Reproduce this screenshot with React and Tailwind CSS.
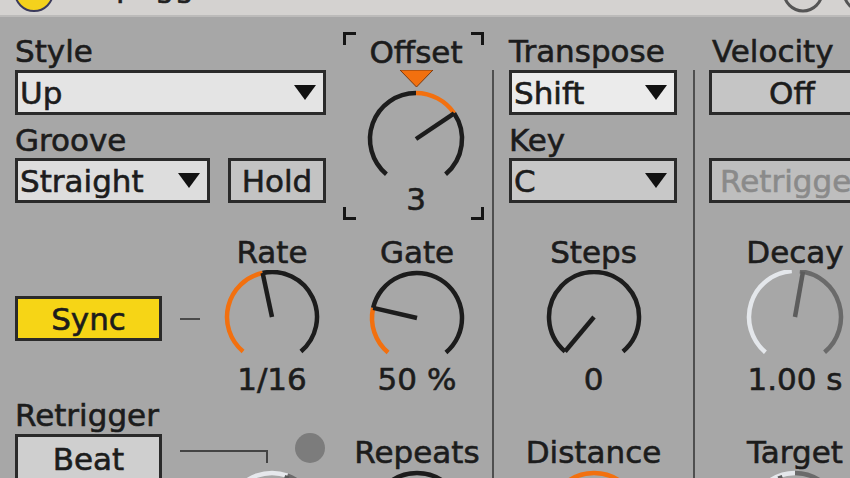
import React from "react";

const INK = "#1c1c1c";
const ORANGE = "#f2700f";

function pt(cx, cy, r, a) {
  const rad = (a * Math.PI) / 180;
  return [cx + r * Math.sin(rad), cy - r * Math.cos(rad)];
}

function arcPath(cx, cy, r, from, to) {
  const [x1, y1] = pt(cx, cy, r, from);
  const [x2, y2] = pt(cx, cy, r, to);
  const large = to - from > 180 ? 1 : 0;
  return `M${x1} ${y1} A${r} ${r} 0 ${large} 1 ${x2} ${y2}`;
}

// knob: arcs from -140 to 140 degrees, pointer from the centre to the arc
function Knob({ w = 100, h = 91, cx = 50, cy = 47, r = 45, arcs, ptr, ptrColor = INK, children }) {
  const [px, py] = ptr == null ? [cx, cy] : pt(cx, cy, r, ptr);
  return (
    <svg width={w} height={h} className="block shrink-0">
      {children}
      {arcs.map((a, i) => (
        <path key={i} d={arcPath(cx, cy, r, a[0], a[1])} fill="none" stroke={a[2]} strokeWidth="4.5" />
      ))}
      {ptr != null && <line x1={cx} y1={cy} x2={px} y2={py} stroke={ptrColor} strokeWidth="4.5" />}
    </svg>
  );
}

function Label({ children, className = "" }) {
  return (
    <div className={`h-[36px] shrink-0 leading-[36px] text-[31px] text-[#1c1c1c] whitespace-nowrap ${className}`}>
      {children}
    </div>
  );
}

function Arrow() {
  return (
    <svg width="22" height="15" className="shrink-0">
      <polygon points="0,0 22,0 11,15" fill="#111" />
    </svg>
  );
}

function Dropdown({ value, className = "" }) {
  return (
    <div
      className={`flex shrink-0 items-center justify-between h-[45px] border-[3px] border-[#2a2a2a] pl-[2px] pr-[7px] text-[31px] leading-[36px] text-[#1c1c1c] ${className}`}
    >
      <span>{value}</span>
      <Arrow />
    </div>
  );
}

function Button({ children, className = "" }) {
  return (
    <div
      className={`flex shrink-0 items-center justify-center h-[45px] border-[3px] border-[#2a2a2a] text-[31px] leading-[36px] whitespace-nowrap overflow-hidden ${className}`}
    >
      {children}
    </div>
  );
}

function Corner({ className }) {
  return <div className={`absolute w-[13px] h-[13px] border-[#151515] ${className}`} />;
}

export default function App() {
  return (
    <div className="w-[850px] h-[478px] overflow-hidden bg-[#a7a7a7] font-['DejaVu_Sans',sans-serif] text-[#1c1c1c] [-webkit-text-stroke:0.6px]">
      {/* title bar, mostly cropped */}
      <div className="h-[17px] bg-[#d4d2d0] border-b-2 border-[#bcbbba] flex overflow-hidden">
        <svg width="60" height="15" className="shrink-0">
          <circle cx="34" cy="-8" r="19" fill="#f4d21c" stroke="#3b3b5c" strokeWidth="2" />
        </svg>
        <div className="ml-[22px] mt-[-32px] h-[36px] leading-[36px] text-[31px] text-[#222]">Arpeggiator</div>
        <div className="flex-1" />
        <svg width="90" height="15" className="shrink-0">
          <circle cx="43" cy="-8" r="19" fill="none" stroke="#555" strokeWidth="3" />
          <circle cx="103" cy="-8" r="19" fill="none" stroke="#555" strokeWidth="3" />
        </svg>
      </div>

      <div className="flex h-[461px]">
        {/* column 1 */}
        <div className="w-[492px] shrink-0 flex flex-col">
          <div className="h-[217px] shrink-0 flex pl-[15px] pt-[15px]">
            <div className="w-[311px] pt-[1px]">
              <Label>Style</Label>
              <Dropdown value="Up" className="mt-[1px] bg-[#e4e4e4]" />
              <Label className="mt-[7px]">Groove</Label>
              <div className="flex">
                <Dropdown value="Straight" className="w-[195px] bg-[#dddddd]" />
                <Button className="ml-[18px] w-[98px] bg-[#c3c3c3]">Hold</Button>
              </div>
            </div>
            <div className="relative ml-[17px] w-[141px] h-[188px] flex flex-col items-center">
              <Corner className="left-0 top-0 border-l-[3px] border-t-[3px]" />
              <Corner className="right-0 top-0 border-r-[3px] border-t-[3px]" />
              <Corner className="left-0 bottom-0 border-l-[3px] border-b-[3px]" />
              <Corner className="right-0 bottom-0 border-r-[3px] border-b-[3px]" />
              <Label className="mt-[2px] ml-[5px]">Offset</Label>
              <Knob w={141} h={111} cx={73} cy={69} r={46} arcs={[[-140, 0, INK], [0, 56, ORANGE], [56, 140, INK]]} ptr={56}>
                <polygon points="57,0 90,0 73.5,17" fill={ORANGE} stroke="#7a3a10" strokeWidth="1" />
              </Knob>
              <Label className="ml-[5px]">3</Label>
            </div>
          </div>

          <div className="flex items-start pl-[15px] shrink-0">
            <div className="w-[147px] shrink-0">
              <Button className="mt-[62px] h-[44px] bg-[#f6d516]">Sync</Button>
              <Label className="mt-[56px]">Retrigger</Label>
              <Button className="mt-[1px] h-[50px] bg-[#cfcfcf]">Beat</Button>
            </div>
            <div className="ml-[18px] w-[145px] shrink-0">
              <div className="flex items-start">
                <div className="w-[20px] h-[2px] mt-[84px] bg-[#4a4a4a]" />
                <div className="ml-[22px] w-[100px] flex flex-col items-center">
                  <Label>Rate</Label>
                  <Knob arcs={[[-140, -12, ORANGE], [-12, 140, INK]]} ptr={-12} />
                  <Label>1/16</Label>
                </div>
              </div>
              <div className="flex items-start">
                <div className="w-[88px] h-[13px] mt-[53px] border-t-2 border-r-2 border-[#444]" />
                <div className="ml-[27px] mt-[36px] w-[30px] h-[30px] rounded-full bg-[#7c7c7c]" />
              </div>
              <div className="ml-[42px] mt-[7px]">
                <Knob h={100} cy={48} arcs={[[-140, 20, "#e6e8ec"], [20, 140, "#6a6a6a"]]} ptr={20} ptrColor="#5a5a5a" />
              </div>
            </div>
            <div className="ml-[27px] w-[130px] shrink-0 flex flex-col items-center">
              <Label>Gate</Label>
              <Knob w={130} cx={65} cy={48} arcs={[[-140, -77, ORANGE], [-77, 140, INK]]} ptr={-77} />
              <Label>50 %</Label>
              <Label className="mt-[37px]">Repeats</Label>
              <Knob w={130} h={100} cx={65} cy={48} arcs={[[-140, 140, INK]]} ptr={-140} />
            </div>
          </div>
        </div>

        <div className="w-[2px] mt-[53px] bg-[#4f4f4f] shrink-0" />

        {/* column 2 */}
        <div className="w-[199px] shrink-0 flex flex-col">
          <div className="h-[217px] shrink-0 pl-[15px] pt-[16px]">
            <Label>Transpose</Label>
            <Dropdown value="Shift" className="mt-[1px] w-[168px] bg-[#ebebeb]" />
            <Label className="mt-[7px]">Key</Label>
            <Dropdown value="C" className="w-[168px] bg-[#c8c8c8]" />
          </div>
          <div className="flex flex-col items-center shrink-0">
            <Label>Steps</Label>
            <Knob arcs={[[-140, 140, INK]]} ptr={-140} />
            <Label>0</Label>
            <Label className="mt-[37px]">Distance</Label>
            <Knob h={100} cy={48} arcs={[[-140, 140, ORANGE]]} />
          </div>
        </div>

        <div className="w-[2px] mt-[53px] bg-[#4f4f4f] shrink-0" />

        {/* column 3 */}
        <div className="w-[180px] shrink-0 flex flex-col">
          <div className="h-[217px] shrink-0 pl-[14px] pt-[16px]">
            <Label className="ml-[3px]">Velocity</Label>
            <Button className="mt-[1px] w-[166px] bg-[#c5c5c5]">Off</Button>
            <div className="h-[43px]" />
            <Button className="w-[166px] bg-[#bebebe] text-[#8a8a8a]">Retrigger</Button>
          </div>
          <div className="ml-[50px] w-[100px] flex flex-col items-center shrink-0">
            <Label>Decay</Label>
            <Knob r={46} arcs={[[-140, -4, "#e4e7eb"], [6, 140, "#6a6a6a"]]} ptr={10} ptrColor="#5c5c5c" />
            <Label>1.00 s</Label>
            <Label className="mt-[37px]">Target</Label>
            <Knob h={100} cy={48} arcs={[[-140, 0, "#e4e7eb"], [0, 140, "#6a6a6a"]]} ptr={-20} ptrColor="#5c5c5c" />
          </div>
        </div>
      </div>
    </div>
  );
}
